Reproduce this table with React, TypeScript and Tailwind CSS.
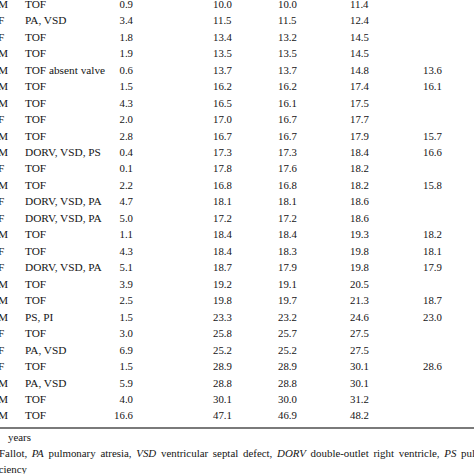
import React from "react";

const rows: string[][] = [
  ["M", "TOF", "0.9", "10.0", "10.0", "11.4", ""],
  ["F", "PA, VSD", "3.4", "11.5", "11.5", "12.4", ""],
  ["F", "TOF", "1.8", "13.4", "13.2", "14.5", ""],
  ["M", "TOF", "1.9", "13.5", "13.5", "14.5", ""],
  ["M", "TOF absent valve", "0.6", "13.7", "13.7", "14.8", "13.6"],
  ["M", "TOF", "1.5", "16.2", "16.2", "17.4", "16.1"],
  ["M", "TOF", "4.3", "16.5", "16.1", "17.5", ""],
  ["F", "TOF", "2.0", "17.0", "16.7", "17.7", ""],
  ["M", "TOF", "2.8", "16.7", "16.7", "17.9", "15.7"],
  ["M", "DORV, VSD, PS", "0.4", "17.3", "17.3", "18.4", "16.6"],
  ["F", "TOF", "0.1", "17.8", "17.6", "18.2", ""],
  ["M", "TOF", "2.2", "16.8", "16.8", "18.2", "15.8"],
  ["F", "DORV, VSD, PA", "4.7", "18.1", "18.1", "18.6", ""],
  ["F", "DORV, VSD, PA", "5.0", "17.2", "17.2", "18.6", ""],
  ["M", "TOF", "1.1", "18.4", "18.4", "19.3", "18.2"],
  ["F", "TOF", "4.3", "18.4", "18.3", "19.8", "18.1"],
  ["F", "DORV, VSD, PA", "5.1", "18.7", "17.9", "19.8", "17.9"],
  ["M", "TOF", "3.9", "19.2", "19.1", "20.5", ""],
  ["M", "TOF", "2.5", "19.8", "19.7", "21.3", "18.7"],
  ["M", "PS, PI", "1.5", "23.3", "23.2", "24.6", "23.0"],
  ["F", "TOF", "3.0", "25.8", "25.7", "27.5", ""],
  ["F", "PA, VSD", "6.9", "25.2", "25.2", "27.5", ""],
  ["F", "TOF", "1.5", "28.9", "28.9", "30.1", "28.6"],
  ["M", "PA, VSD", "5.9", "28.8", "28.8", "30.1", ""],
  ["M", "TOF", "4.0", "30.1", "30.0", "31.2", ""],
  ["M", "TOF", "16.6", "47.1", "46.9", "48.2", ""],
];

export default function App() {
  return (
    <div className="w-[474px] h-[474px] overflow-hidden bg-white [font-family:'Liberation_Serif','Times_New_Roman',serif] text-[#141414]">
      <div className="mt-[-4.24px] ml-[-2px] text-[10.8px]">
        {rows.map((r, i) => (
          <div
            key={i}
            className="grid grid-cols-[27px_83px_25px_145px_72px_73px_1fr] h-[16.48px] leading-[16.48px] whitespace-nowrap"
          >
            <div className="text-[11.3px]">{r[0]}</div>
            <div className="text-[11.3px]">{r[1]}</div>
            <div className="text-right">{r[2]}</div>
            <div className="pl-[80px]">{r[3]}</div>
            <div>{r[4]}</div>
            <div>{r[5]}</div>
            <div>{r[6]}</div>
          </div>
        ))}
      </div>
      <div className="mt-[3.5px] h-[1.5px] bg-[#7a7a7a]" />
      <div className="text-[10.9px] whitespace-nowrap">
        <div className="mt-[1px] pl-[8px] leading-[15px]">years</div>
        <div className="leading-[16px] ml-[-1px] [word-spacing:2px]">
          Fallot, <i>PA</i> pulmonary atresia, <i>VSD</i> ventricular septal defect, <i>DORV</i> double-outlet right ventricle, <i>PS</i> pulmonary
        </div>
        <div className="leading-[16px] ml-[-8px]">ficiency</div>
      </div>
    </div>
  );
}
